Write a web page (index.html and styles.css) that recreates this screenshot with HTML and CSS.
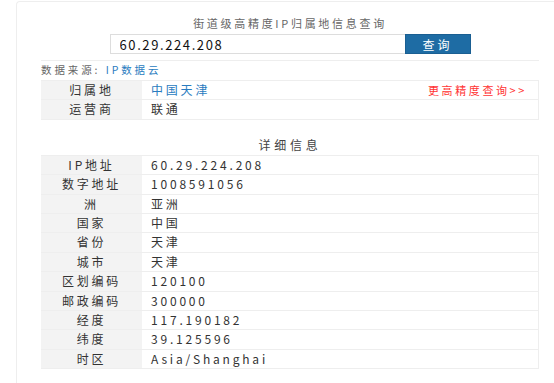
FILE: index.html
```html
<!DOCTYPE html>
<html lang="zh-CN">

<head>
    <meta charset="UTF-8">
    <meta name="viewport" content="width=device-width, initial-scale=1.0">
    <title>IP归属地查询</title>
    <link rel="stylesheet" href="styles.css">
</head>

<body>
    <div class="card">
        <h1 class="title">街道级高精度IP归属地信息查询</h1>
        <form class="search" action="#" method="GET">
            <input type="text" class="search-input" name="ip" value="60.29.224.208">
            <button type="submit" class="search-btn">查询</button>
        </form>

        <div class="source">数据来源: <a href="#">IP数据云</a></div>

        <div class="table">
            <div class="row">
                <div class="label">归属地</div>
                <div class="value"><span class="blue">中国天津</span><a class="more" href="#">更高精度查询&gt;&gt;</a></div>
            </div>
            <div class="row">
                <div class="label">运营商</div>
                <div class="value">联通</div>
            </div>
        </div>

        <h2 class="subtitle">详细信息</h2>

        <div class="table">
            <div class="row"><div class="label">IP地址</div><div class="value">60.29.224.208</div></div>
            <div class="row"><div class="label">数字地址</div><div class="value">1008591056</div></div>
            <div class="row"><div class="label">洲</div><div class="value">亚洲</div></div>
            <div class="row"><div class="label">国家</div><div class="value">中国</div></div>
            <div class="row"><div class="label">省份</div><div class="value">天津</div></div>
            <div class="row"><div class="label">城市</div><div class="value">天津</div></div>
            <div class="row"><div class="label">区划编码</div><div class="value">120100</div></div>
            <div class="row"><div class="label">邮政编码</div><div class="value">300000</div></div>
            <div class="row"><div class="label">经度</div><div class="value">117.190182</div></div>
            <div class="row"><div class="label">纬度</div><div class="value">39.125596</div></div>
            <div class="row"><div class="label">时区</div><div class="value">Asia/Shanghai</div></div>
        </div>
    </div>
</body>

</html>
```

FILE: styles.css
```css
/* Page and outer card */
body {
    margin: 0;
    background: #ffffff;
    font-family: "Noto Sans CJK SC", "Noto Sans", sans-serif;
    color: #333;
    overflow: hidden;
}

.card {
    width: 498px;
    height: 368px;
    margin: 1px 0 0 16px;
    padding: 13px 24px 0;
    border: 1px solid #eeeeee;
    border-bottom: none;
    border-radius: 4px 4px 0 0;
}

.title {
    margin: 0;
    font-size: 11px;
    font-weight: normal;
    line-height: 16px;
    letter-spacing: 2.7px;
    color: #666;
    text-align: center;
}

/* Search box */
.search {
    display: flex;
    justify-content: center;
    margin-top: 3px;
    padding-bottom: 6px;
    border-bottom: 1px solid #eeeeee;
}

.search-input {
    width: 295px;
    height: 20px;
    box-sizing: border-box;
    margin: 0;
    padding: 0 0 0 9px;
    border: 1px solid #dddddd;
    border-right: none;
    font-family: "Noto Sans CJK SC", sans-serif;
    font-size: 13px;
    letter-spacing: 1.6px;
    color: #111;
    outline: none;
}

.search-btn {
    width: 66px;
    height: 20px;
    margin: 0;
    padding: 0;
    border: 1px solid #1a5f92;
    background: #1e6ca4;
    color: #ffffff;
    font-family: "Noto Sans CJK SC", sans-serif;
    font-size: 12px;
    letter-spacing: 3px;
    cursor: pointer;
}

.source {
    margin-top: 1px;
    font-size: 10.5px;
    line-height: 16px;
    letter-spacing: 2.9px;
    color: #666;
}

.source a {
    color: #2a7cc0;
    text-decoration: none;
}

/* Info tables */
.table {
    margin-top: 2px;
    border: 1px solid #eeeeee;
    border-left: none;
}

.row {
    display: flex;
    height: 18.4px;
    border-top: 1px solid #eeeeee;
    font-size: 12px;
    line-height: 18.4px;
    letter-spacing: 2.8px;
}

.row:first-child {
    border-top: none;
}

.label {
    width: 101px;
    flex: none;
    background: #f3f3f3;
    text-align: center;
}

.value {
    flex: 1;
    display: flex;
    justify-content: space-between;
    padding: 0 11px 0 9px;
}

.blue {
    color: #2a7cc0;
}

.more {
    color: #ff3333;
    text-decoration: none;
    font-size: 11px;
    letter-spacing: 2.6px;
}

.subtitle {
    margin: 17px 0 0;
    font-size: 12px;
    font-weight: normal;
    line-height: 16px;
    letter-spacing: 3.8px;
    text-align: center;
    color: #444;
}
```
